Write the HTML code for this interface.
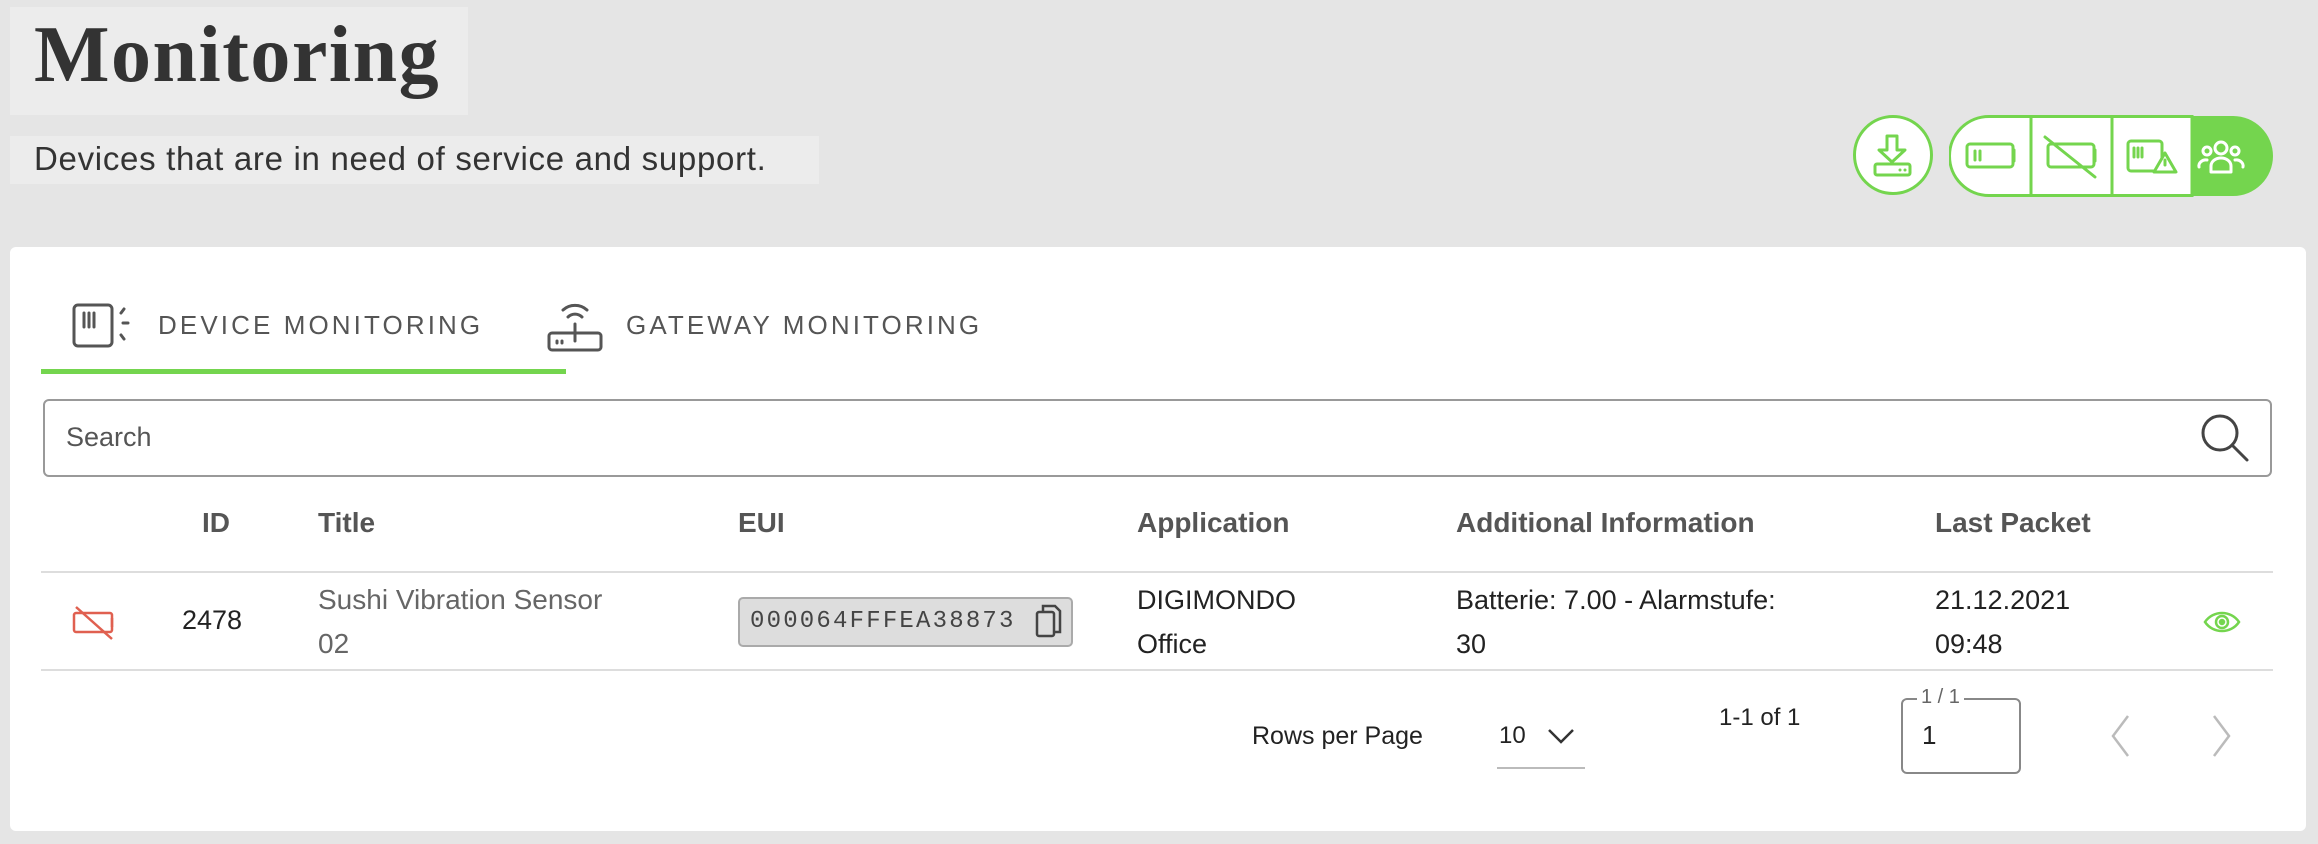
<!DOCTYPE html>
<html><head><meta charset="utf-8"><style>
*{margin:0;padding:0;box-sizing:border-box}
body{width:2318px;height:844px;background:#e5e5e5;font-family:"Liberation Sans",sans-serif;position:relative;overflow:hidden;color:#222}
.a{position:absolute;white-space:nowrap}
.h{font-weight:bold;font-size:28px;color:#555;top:507px}
.c{font-size:27px;color:#222}
</style></head><body>
<div class="a" style="left:10px;top:7px;width:458px;height:108px;background:#ececec"></div>
<div class="a" style="left:34px;top:10px;font-family:'Liberation Serif',serif;font-weight:bold;font-size:80px;letter-spacing:1.5px;color:#333">Monitoring</div>
<div class="a" style="left:10px;top:136px;width:809px;height:48px;background:#ececec"></div>
<div class="a" style="left:34px;top:140px;font-size:33px;letter-spacing:0.7px;color:#333">Devices that are in need of service and support.</div>

<svg class="a" style="left:1850px;top:112px" width="90" height="90" viewBox="0 0 90 90">
<circle cx="43" cy="43" r="38.5" fill="#fff" stroke="#74d54e" stroke-width="3"/>
<g fill="none" stroke="#74d54e" stroke-width="3" stroke-linejoin="round"><path d="M37 24h10v14h8l-13 12-13-12h8z"/><rect x="25" y="52" width="35" height="11" rx="2"/></g>
<circle cx="50" cy="58" r="1.5" fill="#74d54e"/><circle cx="55" cy="58" r="1.5" fill="#74d54e"/>
</svg>
<svg class="a" style="left:1949px;top:115px" width="325" height="82" viewBox="0 0 325 82">
<path d="M40 1.5H243V80.5H40A39.5 39.5 0 0 1 40 1.5Z" fill="#fff" stroke="#74d54e" stroke-width="3"/>
<path d="M243 1H284A40 40 0 0 1 284 81H243Z" fill="#74d54e"/>
<path d="M82 1v80M163 1v80" stroke="#74d54e" stroke-width="3"/>
<g fill="none" stroke="#74d54e" stroke-width="3" stroke-linejoin="round" stroke-linecap="round">
<rect x="18" y="29" width="46" height="23" rx="3"/><path d="M65 35v11M26 36v9M31 36v9"/>
<rect x="99" y="29" width="46" height="23" rx="3"/><path d="M146 35v11M96 22l50 40"/>
<rect x="179" y="26" width="34" height="30" rx="3"/><path d="M185 33v9M189 33v9M193 33v9"/>
<path d="M205 57l11-19 11 19z" fill="#fff"/><path d="M216 45v5"/>
<g stroke="#fff"><circle cx="272" cy="33" r="6"/><circle cx="258" cy="36" r="4"/><circle cx="286" cy="36" r="4"/><path d="M262 57v-6a10 8 0 0 1 20 0v6z"/><path d="M250 52a7 6 0 0 1 8-7M294 52a7 6 0 0 0-8-7"/></g>
</g></svg>

<div class="a" style="left:10px;top:247px;width:2296px;height:584px;background:#fff;border-radius:6px"></div>
<svg class="a" style="left:72px;top:303px" width="64" height="46" viewBox="0 0 64 46" fill="none" stroke="#555" stroke-width="3" stroke-linecap="round">
<rect x="2" y="2" width="38" height="41" rx="4"/><path d="M12 10v14M17 10v14M22 10v14M52 6l-3 4M51 20h5M49 32l3 4"/></svg>
<div class="a" style="left:158px;top:310px;font-size:26px;letter-spacing:3.1px;color:#555">DEVICE MONITORING</div>
<svg class="a" style="left:547px;top:300px" width="60" height="54" viewBox="0 0 60 54" fill="none" stroke="#555" stroke-width="3" stroke-linecap="round">
<path d="M16 10a18 18 0 0 1 24 0M21 17a10 10 0 0 1 14 0M28 24v17"/><rect x="2" y="33" width="52" height="17" rx="3"/><path d="M10 41v2M15 41v2"/></svg>
<div class="a" style="left:626px;top:310px;font-size:26px;letter-spacing:3.1px;color:#555">GATEWAY MONITORING</div>
<div class="a" style="left:41px;top:369px;width:525px;height:5px;background:#74d54e"></div>

<div class="a" style="left:43px;top:399px;width:2229px;height:78px;border:2px solid #999;border-radius:6px"></div>
<div class="a" style="left:66px;top:422px;font-size:27px;color:#555">Search</div>
<svg class="a" style="left:2198px;top:411px" width="54" height="54" viewBox="0 0 54 54" fill="none" stroke="#444" stroke-width="3" stroke-linecap="round"><circle cx="22" cy="22" r="17"/><path d="M34 34l15 15"/></svg>

<div class="a h" style="left:202px">ID</div>
<div class="a h" style="left:318px">Title</div>
<div class="a h" style="left:738px">EUI</div>
<div class="a h" style="left:1137px">Application</div>
<div class="a h" style="left:1456px">Additional Information</div>
<div class="a h" style="left:1935px">Last Packet</div>
<div class="a" style="left:41px;top:571px;width:2232px;height:2px;background:#ddd"></div>

<svg class="a" style="left:72px;top:604px" width="46" height="38" viewBox="0 0 46 38" fill="none" stroke="#e06050" stroke-width="2.5"><rect x="2" y="9" width="38" height="19" rx="2"/><path d="M40 14v9M4 3l36 32"/></svg>
<div class="a c" style="left:182px;top:605px">2478</div>
<div class="a c" style="left:318px;top:578px;color:#666;line-height:44px;font-size:28px">Sushi Vibration Sensor<br>02</div>
<div class="a" style="left:738px;top:597px;width:335px;height:50px;background:#ddd;border:2px solid #aaa;border-radius:5px"></div>
<div class="a" style="left:750px;top:608px;font-family:'Liberation Mono',monospace;font-size:24px;color:#444;letter-spacing:2.2px">000064FFFEA38873</div>
<svg class="a" style="left:1034px;top:602px" width="30" height="38" viewBox="0 0 30 38" fill="none" stroke="#444" stroke-width="2.5"><rect x="3" y="10" width="17" height="24" rx="2"/><path d="M9 10V4h12l5 5v21h-6"/></svg>
<div class="a c" style="left:1137px;top:578px;line-height:44px">DIGIMONDO<br>Office</div>
<div class="a c" style="left:1456px;top:578px;line-height:44px">Batterie: 7.00 - Alarmstufe:<br>30</div>
<div class="a c" style="left:1935px;top:578px;line-height:44px">21.12.2021<br>09:48</div>
<svg class="a" style="left:2203px;top:607px" width="38" height="30" viewBox="0 0 38 30" fill="none" stroke="#74d54e" stroke-width="2.5"><path d="M2 15C10 3 28 3 36 15 28 27 10 27 2 15z"/><circle cx="19" cy="15" r="6"/><circle cx="19" cy="15" r="2" fill="#74d54e"/></svg>
<div class="a" style="left:41px;top:669px;width:2232px;height:2px;background:#ddd"></div>

<div class="a" style="left:1252px;top:722px;font-size:25px;color:#222">Rows per Page</div>
<div class="a" style="left:1499px;top:722px;font-size:24px;color:#222">10</div>
<svg class="a" style="left:1546px;top:726px" width="30" height="20" viewBox="0 0 30 20" fill="none" stroke="#333" stroke-width="2.5"><path d="M3 4l12 12 12-12"/></svg>
<div class="a" style="left:1497px;top:767px;width:88px;height:2px;background:#bbb"></div>
<div class="a" style="left:1719px;top:704px;font-size:24px;color:#222">1-1 of 1</div>
<div class="a" style="left:1901px;top:698px;width:120px;height:76px;border:2px solid #888;border-radius:6px"></div>
<div class="a" style="left:1917px;top:686px;font-size:20px;color:#666;background:#fff;padding:0 4px">1 / 1</div>
<div class="a" style="left:1922px;top:720px;font-size:26px;color:#222">1</div>
<svg class="a" style="left:2108px;top:713px" width="26" height="46" viewBox="0 0 26 46" fill="none" stroke="#bbb" stroke-width="2.5"><path d="M20 3L5 23l15 20"/></svg>
<svg class="a" style="left:2208px;top:713px" width="26" height="46" viewBox="0 0 26 46" fill="none" stroke="#bbb" stroke-width="2.5"><path d="M6 3l15 20-15 20"/></svg>
</body></html>
